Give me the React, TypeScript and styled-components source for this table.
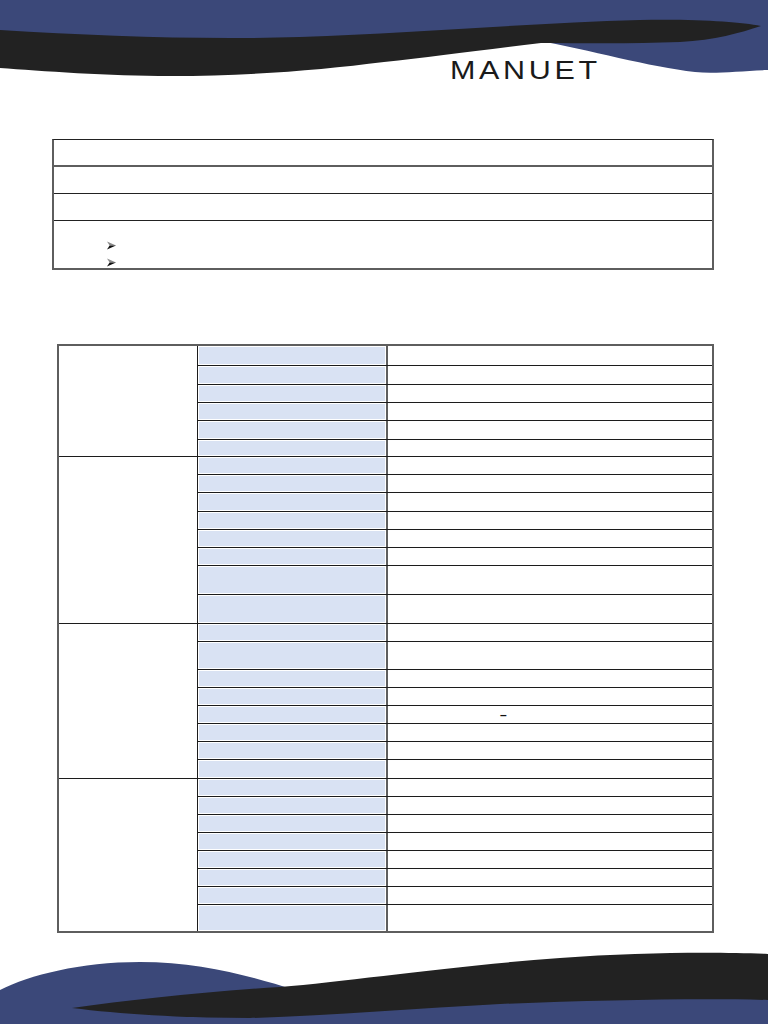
import React from "react";
import styled, { createGlobalStyle } from "styled-components";

const NAVY = "#3b4879";
const INK = "#222222";
const RULE = "#1c1c1c";
const FRAME = "#5e5e5e";
const KEY_BG = "#d9e2f3";

const GlobalStyle = createGlobalStyle`
  html, body {
    margin: 0;
    padding: 0;
    background: #ffffff;
  }
  body {
    font-family: "Liberation Sans", Arial, sans-serif;
    color: #111111;
  }
`;

const Page = styled.div`
  width: 768px;
  height: 1024px;
  display: flex;
  flex-direction: column;
  overflow: hidden;
  background: #ffffff;
`;

const Header = styled.header`
  position: relative;
  height: 100px;
  flex-shrink: 0;

  svg {
    display: block;
  }
`;

const Logo = styled.div`
  position: absolute;
  top: 58px;
  left: 450px;
  font: 400 25px/25px "Liberation Sans", Arial, sans-serif;
  letter-spacing: 3px;
  color: #1a1a1a;
  transform: scaleX(1.22);
  transform-origin: left center;
`;

const InfoBox = styled.section`
  margin: 39px 0 0 52px;
  width: 662px;
  height: 131px;
  box-sizing: border-box;
  border: 2px solid ${FRAME};
  border-top: 1px solid ${INK};
  display: flex;
  flex-direction: column;
`;

const InfoRow = styled.div<{ $h: number; $line?: string }>`
  height: ${(p) => p.$h}px;
  box-sizing: border-box;
  border-bottom: ${(p) => p.$line ?? "none"};
`;

const BulletList = styled.ul`
  list-style: none;
  margin: 0;
  padding: 16px 0 0 53px;
`;

const Bullet = styled.li`
  height: 17px;
  display: flex;
  align-items: center;
`;

const Table = styled.section`
  margin: 74px 0 0 57px;
  width: 657px;
  box-sizing: border-box;
  border: 2px solid ${FRAME};
  display: flex;
  flex-direction: column;
`;

const Group = styled.div<{ $first: boolean }>`
  display: grid;
  grid-template-columns: 139px 1fr;
  border-top: ${(p) => (p.$first ? "none" : `1px solid ${RULE}`)};
`;

const GroupLabel = styled.div`
  box-sizing: border-box;
  border-right: 1px solid ${RULE};
`;

const GroupRows = styled.div`
  display: flex;
  flex-direction: column;
`;

const Row = styled.div<{ $h: number; $first: boolean }>`
  display: grid;
  grid-template-columns: 190px 1fr;
  height: ${(p) => p.$h}px;
  box-sizing: border-box;
  border-top: ${(p) => (p.$first ? "none" : `1px solid ${RULE}`)};
`;

const KeyCell = styled.div`
  background: ${KEY_BG};
  box-shadow: inset 0 0 0 1px #ffffff;
  border-right: 2px solid ${FRAME};
`;

const ValueCell = styled.div`
  display: flex;
  align-items: center;
  padding-left: 112px;
  font-size: 12px;
  font-weight: 700;
  line-height: 1;
`;

const Footer = styled.footer`
  margin-top: auto;
  flex-shrink: 0;

  svg {
    display: block;
  }
`;

const groups: { rows: number[]; dash?: number }[] = [
  { rows: [19, 19, 18, 18, 19, 17] },
  { rows: [17, 18, 19, 18, 18, 18, 29, 29] },
  { rows: [17, 28, 18, 18, 18, 18, 18, 19], dash: 4 },
  { rows: [17, 18, 18, 18, 18, 18, 18, 27] },
];

const ArrowBullet = () => (
  <svg width="9" height="9" viewBox="0 0 9 9">
    <polygon points="0,0.5 9,4.5 2.6,4.5" fill="#8a8a8a" />
    <polygon points="2.6,4.5 9,4.5 0,8.5" fill="#111111" />
  </svg>
);

const HeaderWave = () => (
  <svg width="768" height="100" viewBox="0 0 768 100">
    <path
      fill={NAVY}
      d="M0,0 H768 V70 C740,71 715,74 695,72 C650,67 590,50 535,40 L0,40 Z"
    />
    <path
      fill={INK}
      d="M0,30 C100,36 200,40 300,37 C420,33 530,23 640,20 C700,19 740,22 761,26 C740,33 715,40 680,42 C630,44 580,43 541,43 C480,50 430,57 384,62 C320,70 250,76 170,76 C110,76 40,71 0,68 Z"
    />
  </svg>
);

const FooterWave = () => (
  <svg width="768" height="84" viewBox="0 0 768 84">
    <path
      fill={NAVY}
      d="M0,50 C30,35 80,22 140,22 C200,22 250,36 295,50 L768,40 V84 H0 Z"
    />
    <path
      fill={INK}
      d="M72,68 C130,60 200,52 280,47 C350,41 450,26 560,18 C640,12 720,12 768,14 L768,60 C700,58 600,60 500,64 C420,68 330,76 250,78 C180,78 120,74 72,68 Z"
    />
  </svg>
);

export default function App() {
  return (
    <>
      <GlobalStyle />
      <Page>
        <Header>
          <HeaderWave />
          <Logo>MANUET</Logo>
        </Header>

        <InfoBox>
          <InfoRow $h={27} $line={`2px solid ${FRAME}`} />
          <InfoRow $h={27} $line={`1px solid ${INK}`} />
          <InfoRow $h={27} $line={`1px solid ${INK}`} />
          <InfoRow $h={47}>
            <BulletList>
              <Bullet>
                <ArrowBullet />
              </Bullet>
              <Bullet>
                <ArrowBullet />
              </Bullet>
            </BulletList>
          </InfoRow>
        </InfoBox>

        <Table>
          {groups.map((g, gi) => (
            <Group key={gi} $first={gi === 0}>
              <GroupLabel />
              <GroupRows>
                {g.rows.map((h, ri) => (
                  <Row key={ri} $h={h} $first={ri === 0}>
                    <KeyCell />
                    <ValueCell>{g.dash === ri ? "–" : null}</ValueCell>
                  </Row>
                ))}
              </GroupRows>
            </Group>
          ))}
        </Table>

        <Footer>
          <FooterWave />
        </Footer>
      </Page>
    </>
  );
}
